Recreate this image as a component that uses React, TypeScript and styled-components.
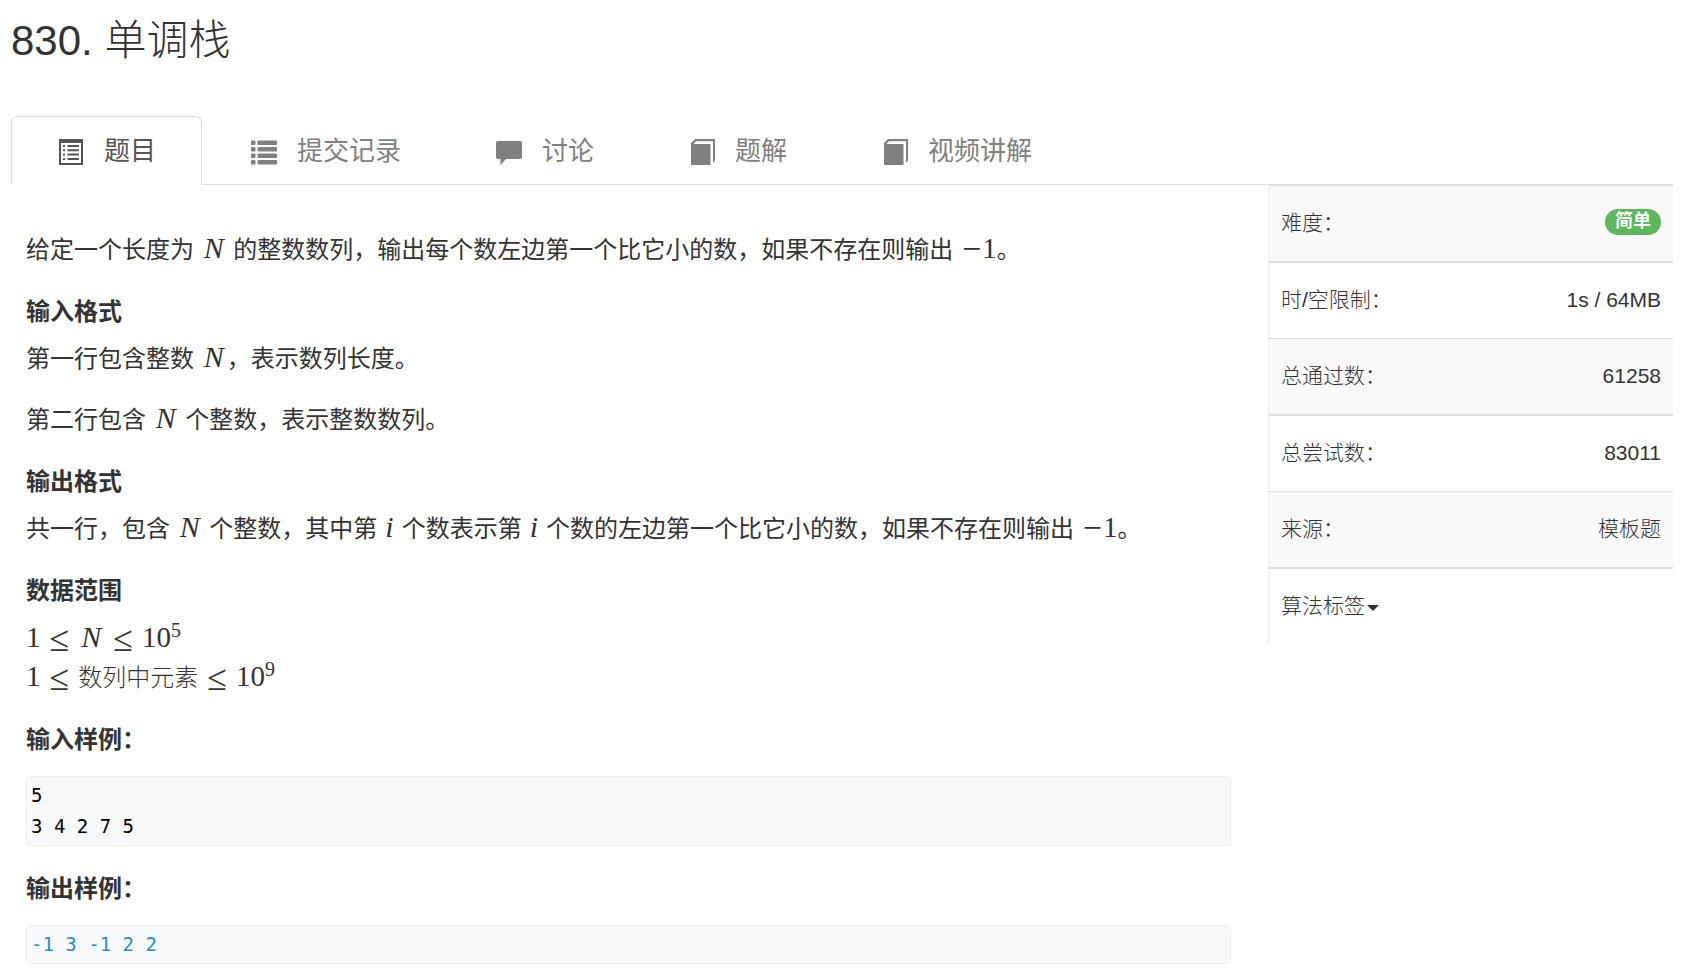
import React from "react";
import styled, { createGlobalStyle } from "styled-components";

const GlobalStyle = createGlobalStyle`
  *, *::before, *::after { box-sizing: border-box; }
  body {
    margin: 0;
    background: #fff;
    color: #333;
    font-family: "Liberation Sans", "Noto Sans CJK SC", sans-serif;
    font-size: 21px;
    line-height: 31px;
  }
`;

const Page = styled.main`
  padding: 16px 16px 0 11px;
`;

const Title = styled.h1`
  margin: 0 0 50px;
  font-size: 42px;
  font-weight: 300;
  line-height: 50px;
`;

const Tabs = styled.nav`
  display: flex;
  gap: 2px;
  border-bottom: 1px solid #ddd;
`;

const Tab = styled.a<{ $active?: boolean }>`
  display: flex;
  align-items: center;
  gap: 20px;
  height: 69px;
  margin-bottom: -1px;
  padding: 0 45px 0 46px;
  border: 1px solid transparent;
  border-color: ${(p) => (p.$active ? "#ddd #ddd #fff" : "transparent")};
  border-radius: 6px 6px 0 0;
  color: ${(p) => (p.$active ? "#555" : "#808080")};
  font-size: 26px;
  line-height: 36px;
  text-decoration: none;
  white-space: nowrap;

  svg {
    flex: none;
    margin-top: 2px;
  }
`;

const Columns = styled.div`
  display: flex;
  align-items: flex-start;
`;

const Statement = styled.article`
  flex: 1;
  min-width: 0;
  padding: 46px 37px 0 15px;
  font-size: 24px;
  line-height: 38px;
`;

const Paragraph = styled.p`
  margin: 0 0 23px;
`;

const Range = styled(Paragraph)`
  line-height: 39px;
`;

const Heading = styled.h2`
  margin: 0 0 8px;
  font-size: 24px;
  font-weight: 700;
  line-height: 40px;
`;

const SampleHeading = styled(Heading)`
  margin-bottom: 16px;
`;

const Sample = styled.pre<{ $color?: string }>`
  margin: 0 0 23px;
  padding: 3px 4px;
  border: 1px solid #eee;
  border-radius: 4px;
  background: #f6f8fa;
  color: ${(p) => p.$color ?? "#000"};
  font-family: "DejaVu Sans Mono", monospace;
  font-size: 19px;
  line-height: 31px;
`;

const Formula = styled.span`
  font-family: "Liberation Serif", "Noto Sans CJK SC", serif;
  font-size: 29px;
  line-height: 1;
  white-space: nowrap;

  sup {
    font-size: 20px;
    line-height: 0;
    vertical-align: 10px;
  }
`;

const Variable = styled.i<{ $wide?: boolean }>`
  display: inline-block;
  min-width: ${(p) => (p.$wide ? "26px" : "11px")};
  font-size: 30px;
  text-align: center;
`;

const Relation = styled.span`
  margin: 0 9px;
  font-size: 36px;
  line-height: 0;
  vertical-align: -4px;
`;

const Sign = styled.span`
  margin: 0 1px 0 2px;
  font-size: 34px;
  line-height: 0;
  vertical-align: -2px;
`;

const Words = styled.span`
  font-size: 24px;
  font-weight: 300;
`;

const Info = styled.table`
  flex: none;
  width: 405px;
  margin-top: -1px;
  border-spacing: 0;
  border-left: 1px solid #eee;
`;

const InfoRow = styled.tr<{ $thin?: boolean; $striped?: boolean }>`
  background: ${(p) => (p.$striped ? "#f9f9f9" : "#fff")};

  th,
  td {
    padding: 21px 12px 23px;
    border-top: ${(p) => (p.$thin ? "1px" : "2px")} solid #ddd;
    font-weight: 300;
    text-align: left;
  }

  td {
    text-align: right;
  }
`;

const Badge = styled.span`
  display: block;
  width: max-content;
  height: 26px;
  margin: 2px 0 3px auto;
  padding: 0 10px;
  border-radius: 13px;
  background: #5cb85c;
  color: #fff;
  font-size: 18px;
  font-weight: 700;
  line-height: 24px;
`;

const TagButton = styled.button`
  display: flex;
  align-items: center;
  gap: 2px;
  padding: 0;
  border: 0;
  background: none;
  color: inherit;
  font: inherit;
`;

const Caret = styled.span`
  margin-top: 4px;
  border: 6px solid transparent;
  border-top-color: #333;
  border-bottom: 0;
`;

const ListAltIcon = () => (
  <svg width="26" height="26" viewBox="0 0 26 26" fill="currentColor" aria-hidden="true">
    <path fillRule="evenodd" d="M1 0h24v26H1zM3 4v20h20V4z" />
    <path d="M5 6h2v2H5zM9.500 6H21v2H9.500zM5 10.300h2v2H5zM9.500 10.300H21v2H9.500zM5 14.600h2v2H5zM9.500 14.600H21v2H9.500zM5 19h2v2H5zM9.500 19H21v2H9.500z" />
  </svg>
);

const ListIcon = () => (
  <svg width="26" height="26" viewBox="0 0 26 26" fill="currentColor" aria-hidden="true">
    {[1.5, 8, 14.5, 21].map((y) => (
      <g key={y}>
        <rect x="0" y={y} width="4.500" height="4.500" rx="1" />
        <rect x="6.500" y={y} width="19.500" height="4.500" rx="1" />
      </g>
    ))}
  </svg>
);

const CommentIcon = () => (
  <svg width="26" height="26" viewBox="0 0 26 26" fill="currentColor" aria-hidden="true">
    <path d="M2 2h22a2 2 0 0 1 2 2v14a2 2 0 0 1-2 2H10l-5.500 6v-6H2a2 2 0 0 1-2-2V4a2 2 0 0 1 2-2z" />
  </svg>
);

const BookIcon = () => (
  <svg width="26" height="26" viewBox="0 0 26 26" fill="currentColor" aria-hidden="true">
    <path d="M2 26V4l4-4h20v21.500L24 24V2.300H7L4.500 5h17v21z" />
  </svg>
);

const N = () => (
  <Formula>
    <Variable $wide>N</Variable>
  </Formula>
);

const I = () => (
  <Formula>
    <Variable>i</Variable>
  </Formula>
);

const MinusOne = () => (
  <Formula>
    <Sign>−</Sign>1
  </Formula>
);

const TABS = [
  { label: "题目", Icon: ListAltIcon },
  { label: "提交记录", Icon: ListIcon },
  { label: "讨论", Icon: CommentIcon },
  { label: "题解", Icon: BookIcon },
  { label: "视频讲解", Icon: BookIcon },
];

export default function App() {
  return (
    <Page>
      <GlobalStyle />
      <Title>830. 单调栈</Title>
      <Tabs>
        {TABS.map(({ label, Icon }, index) => (
          <Tab key={label} href="#" $active={index === 0}>
            <Icon />
            {label}
          </Tab>
        ))}
      </Tabs>
      <Columns>
        <Statement>
          <Paragraph>
            给定一个长度为 <N /> 的整数数列，输出每个数左边第一个比它小的数，如果不存在则输出 <MinusOne />。
          </Paragraph>
          <Heading>输入格式</Heading>
          <Paragraph>
            第一行包含整数 <N />，表示数列长度。
          </Paragraph>
          <Paragraph>
            第二行包含 <N /> 个整数，表示整数数列。
          </Paragraph>
          <Heading>输出格式</Heading>
          <Paragraph>
            共一行，包含 <N /> 个整数，其中第 <I /> 个数表示第 <I /> 个数的左边第一个比它小的数，如果不存在则输出 <MinusOne />。
          </Paragraph>
          <Heading>数据范围</Heading>
          <Range>
            <Formula>
              1<Relation>≤</Relation>
              <Variable $wide>N</Variable>
              <Relation>≤</Relation>10<sup>5</sup>
            </Formula>
            <br />
            <Formula>
              1<Relation>≤</Relation>
              <Words>数列中元素</Words>
              <Relation>≤</Relation>10<sup>9</sup>
            </Formula>
          </Range>
          <SampleHeading>输入样例：</SampleHeading>
          <Sample>{"5\n3 4 2 7 5"}</Sample>
          <SampleHeading>输出样例：</SampleHeading>
          <Sample $color="#2b91af">-1 3 -1 2 2</Sample>
        </Statement>
        <Info>
          <tbody>
            <InfoRow $striped>
              <th scope="row">难度：</th>
              <td>
                <Badge>简单</Badge>
              </td>
            </InfoRow>
            <InfoRow>
              <th scope="row">时/空限制：</th>
              <td>1s / 64MB</td>
            </InfoRow>
            <InfoRow $thin $striped>
              <th scope="row">总通过数：</th>
              <td>61258</td>
            </InfoRow>
            <InfoRow>
              <th scope="row">总尝试数：</th>
              <td>83011</td>
            </InfoRow>
            <InfoRow $thin $striped>
              <th scope="row">来源：</th>
              <td>模板题</td>
            </InfoRow>
            <InfoRow>
              <th scope="row" colSpan={2}>
                <TagButton type="button">
                  算法标签
                  <Caret />
                </TagButton>
              </th>
            </InfoRow>
          </tbody>
        </Info>
      </Columns>
    </Page>
  );
}
